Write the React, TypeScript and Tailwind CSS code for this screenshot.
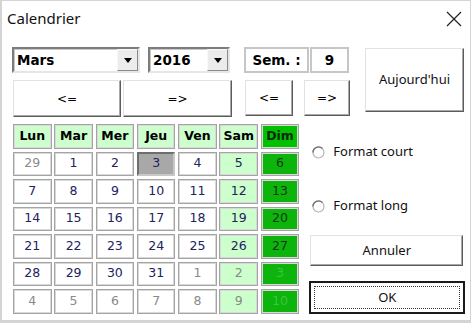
import React from "react";

const ui = { fontFamily: '"Noto Sans", "Open Sans", sans-serif' };
const tah = { fontFamily: '"DejaVu Sans", Verdana, sans-serif' };

type Day = { n: number; cur: boolean; today?: boolean };

const rows: Day[][] = [
  [{ n: 29, cur: false }, { n: 1, cur: true }, { n: 2, cur: true }, { n: 3, cur: true, today: true }, { n: 4, cur: true }, { n: 5, cur: true }, { n: 6, cur: true }],
  [7, 8, 9, 10, 11, 12, 13].map((n) => ({ n, cur: true })),
  [14, 15, 16, 17, 18, 19, 20].map((n) => ({ n, cur: true })),
  [21, 22, 23, 24, 25, 26, 27].map((n) => ({ n, cur: true })),
  [{ n: 28, cur: true }, { n: 29, cur: true }, { n: 30, cur: true }, { n: 31, cur: true }, { n: 1, cur: false }, { n: 2, cur: false }, { n: 3, cur: false }],
  [4, 5, 6, 7, 8, 9, 10].map((n) => ({ n, cur: false })),
];

const heads = ["Lun", "Mar", "Mer", "Jeu", "Ven", "Sam", "Dim"];

const raised =
  "bg-white border border-t-[#e2e2e2] border-l-[#e2e2e2] border-r-[#5c5c5c] border-b-[#5c5c5c] shadow-[inset_-1px_-1px_0_#a8a8a8]";

function Combo({ value, w }: { value: string; w: string }) {
  return (
    <div className={`${w} h-[26px] flex bg-white border-2 border-t-[#7c7c7c] border-l-[#7c7c7c] border-r-[#e6e6e6] border-b-[#e6e6e6] shadow-[inset_1px_1px_0_#c8c8c8]`}>
      <div className="flex-1 flex items-center pl-[3px] text-[13.5px] font-bold text-black" style={tah}>{value}</div>
      <div className="w-[21px] h-full flex items-center justify-center bg-[#ececec] border border-t-[#f8f8f8] border-l-[#f8f8f8] border-r-[#8a8a8a] border-b-[#8a8a8a]">
        <svg width="8" height="5" viewBox="0 0 8 5"><path d="M0 0h8L4 5z" fill="#000" /></svg>
      </div>
    </div>
  );
}

function Radio({ label }: { label: string }) {
  return (
    <div className="flex items-center h-[16px] ml-[3px] gap-[8px]">
      <svg width="13" height="13" viewBox="0 0 13 13">
        <circle cx="6.5" cy="6.5" r="5.5" fill="#fff" stroke="#b4b4b4" strokeWidth="1.2" />
        <path d="M10.4 2.6A5.5 5.5 0 0 0 1 6.5" fill="none" stroke="#707070" strokeWidth="1.4" />
      </svg>
      <span className="text-[13px] text-[#111]" style={ui}>{label}</span>
    </div>
  );
}

export default function App() {
  return (
    <div className="w-[474px] h-[325px] bg-white overflow-hidden">
      <div className="w-[471px] h-[323px] flex flex-col border-l-2 border-t border-r border-b-[3px] border-[#d4d4d4]">
        <div className="h-[35px] flex items-center justify-between pl-[5px] pr-[8px]">
          <span className="text-[15px] text-[#111]" style={ui}>Calendrier</span>
          <svg width="16" height="16" viewBox="0 0 16 16"><path d="M1 1l14 14M15 1L1 15" stroke="#222" strokeWidth="1.2" /></svg>
        </div>

        <div className="flex mt-[11px] pl-[10px]">
          <div className="flex flex-col">
            <div className="flex items-center h-[26px]">
              <Combo value="Mars" w="w-[128px]" />
              <div className="ml-[8px]"><Combo value="2016" w="w-[82px]" /></div>
              <div className="ml-[14px] w-[65px] h-[26px] flex items-center justify-center border-2 border-[#c6c6c6] text-[13.5px] font-bold" style={tah}>Sem. :</div>
              <div className="ml-[1px] w-[39px] h-[26px] flex items-center justify-center border-2 border-[#c6c6c6] text-[13.5px] font-bold" style={tah}>9</div>
            </div>
            <div className="flex mt-[7px] h-[37px]">
              <div className={`ml-[1px] w-[108px] h-full flex items-center justify-center text-[12px] ${raised}`} style={tah}>&lt;=</div>
              <div className={`ml-[2px] w-[109px] h-full flex items-center justify-center text-[12px] ${raised}`} style={tah}>=&gt;</div>
              <div className={`ml-[13px] w-[48px] h-[36px] flex items-center justify-center text-[12px] ${raised}`} style={tah}>&lt;=</div>
              <div className={`ml-[11px] w-[46px] h-[36px] flex items-center justify-center text-[12px] ${raised}`} style={tah}>=&gt;</div>
            </div>
          </div>
          <div className={`ml-[15px] mt-[1px] w-[99px] h-[64px] flex items-center justify-center text-[13px] text-[#111] ${raised}`} style={ui}>
            <span>Au<span className="underline">j</span>ourd'hui</span>
          </div>
        </div>

        <div className="flex mt-[7px] pl-[11px]">
          <div className="grid grid-cols-[repeat(7,38.6px)] auto-rows-[24.5px] gap-x-[2.7px] gap-y-[3px]">
            {heads.map((h, i) => (
              <div
                key={h}
                className={`flex items-center justify-center text-[12.5px] font-bold border border-[#a4a4a4] shadow-[inset_0_0_0_1px_#d8d8d8] ${i === 6 ? "bg-[#00c000] text-[#0b2a0b]" : "bg-[#ccffcc] text-black"}`}
                style={tah}
              >
                {h}
              </div>
            ))}
            {rows.flat().map((d, k) => {
              const col = k % 7;
              let cls = "bg-white";
              let txt = d.cur ? "text-[#22225e]" : "text-[#8a8a8a]";
              if (col === 5) cls = "bg-[#ccffcc]";
              if (col === 6) {
                cls = "bg-[#0cb40c]";
                txt = d.cur ? "text-[#123812]" : "text-[#3fc43f]";
              }
              if (d.today) cls = "bg-[#a8a8a8]";
              const border = d.today
                ? "border-2 border-t-[#6e6e6e] border-l-[#6e6e6e] border-r-[#c8c8c8] border-b-[#c8c8c8]"
                : "border border-[#a4a4a4] shadow-[inset_0_0_0_1px_#d8d8d8]";
              return (
                <div key={k} className={`flex items-center justify-center text-[12.5px] ${cls} ${txt} ${border}`} style={tah}>
                  {d.n}
                </div>
              );
            })}
          </div>

          <div className="ml-[10px] w-[156px] flex flex-col">
            <div className="mt-[20px]"><Radio label="Format court" /></div>
            <div className="mt-[38px]"><Radio label="Format long" /></div>
            <div className={`mt-[21px] ml-[1px] w-[153px] h-[31px] flex items-center justify-center text-[13px] text-[#111] ${raised}`} style={ui}>Annuler</div>
            <div className="mt-[15px] w-[156px] h-[33px] border-2 border-[#1a1a1a] bg-white p-[3px]">
              <div className="w-full h-full border border-dotted border-[#333] flex items-center justify-center text-[13px] text-[#111]" style={ui}>OK</div>
            </div>
          </div>
        </div>
      </div>
    </div>
  );
}
